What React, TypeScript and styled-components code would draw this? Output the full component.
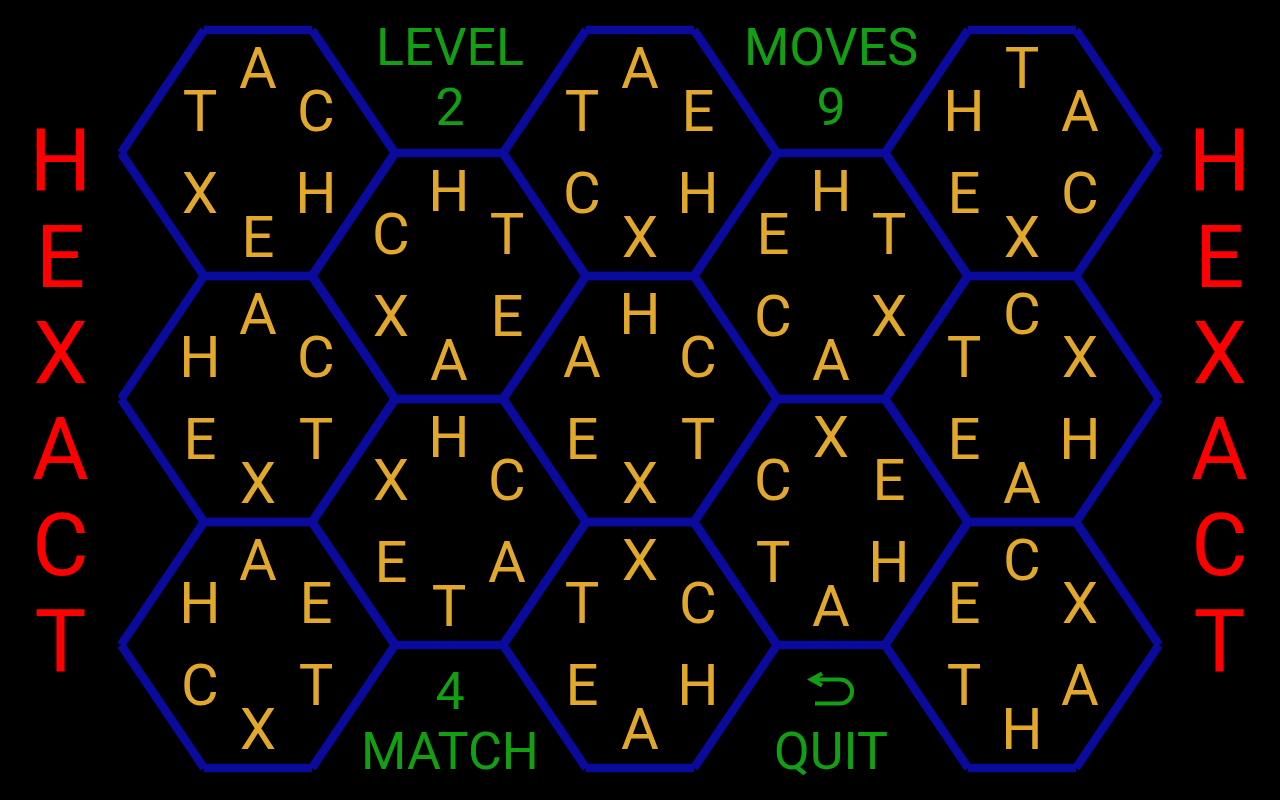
import React from 'react'
import styled, { createGlobalStyle } from 'styled-components'

const BOARD_LEFT = 121
const BOARD_WIDTH = 1038
const HALF_W = 137
const HALF_TOP = 54
const HALF_H = 123

const BLUE = '#0a0a9c'
const GOLD = '#e2a82c'
const GREEN = '#12a012'
const RED = '#ff0000'

const GlobalStyle = createGlobalStyle`
  html, body {
    margin: 0;
    padding: 0;
    background: #000;
  }
  body {
    font-family: Roboto, 'Liberation Sans', sans-serif;
  }
`

const Screen = styled.div`
  display: flex;
  flex-flow: row nowrap;
  width: 1280px;
  height: 800px;
  background: #000;
  overflow: hidden;
`

const SideTitle = styled.div`
  flex: 1;
  display: flex;
  flex-direction: column;
  align-items: center;
  justify-content: center;
  padding-top: 2px;
`

const TitleLetter = styled.span`
  color: ${RED};
  font-family: Roboto, 'Liberation Sans', sans-serif;
  font-size: 87px;
  line-height: 96px;
`

const Board = styled.div`
  position: relative;
  flex: 0 0 ${BOARD_WIDTH}px;
  height: 800px;
`

const Grid = styled.svg`
  position: absolute;
  inset: 0;
  overflow: visible;
`

const Letter = styled.span<{ $x: number; $y: number }>`
  position: absolute;
  left: ${({ $x }) => $x - BOARD_LEFT}px;
  top: ${({ $y }) => $y}px;
  transform: translate(-50%, -50%);
  color: ${GOLD};
  font-family: Roboto, 'Liberation Sans', sans-serif;
  font-size: 58px;
  line-height: 1;
`

const Stat = styled.div<{ $x: number; $y: number }>`
  position: absolute;
  left: ${({ $x }) => $x - BOARD_LEFT}px;
  top: ${({ $y }) => $y}px;
  transform: translateX(-50%);
  display: flex;
  flex-direction: column;
  align-items: center;
  color: ${GREEN};
  font-family: Roboto, 'Liberation Sans', sans-serif;
  font-size: 52px;
  line-height: 60px;
  white-space: nowrap;
`

const StatLine = styled.div`
  height: 60px;
  display: flex;
  align-items: center;
  justify-content: center;
`

// columns of the board, letters go top, upper-right, lower-right, bottom, lower-left, upper-left
const columns = [
  { x: 258, cells: [{ y: 153, l: 'ACHEXT' }, { y: 399, l: 'ACTXEH' }, { y: 645, l: 'AETXCH' }] },
  { x: 449, cells: [{ y: 276, l: 'HTEAXC' }, { y: 522, l: 'HCATEX' }] },
  { x: 640, cells: [{ y: 153, l: 'AEHXCT' }, { y: 399, l: 'HCTXEA' }, { y: 645, l: 'XCHAET' }] },
  { x: 831, cells: [{ y: 276, l: 'HTXACE' }, { y: 522, l: 'XEHATC' }] },
  { x: 1022, cells: [{ y: 153, l: 'TACXEH' }, { y: 399, l: 'CXHAET' }, { y: 645, l: 'CXAHTE' }] },
]

const spots = [
  [0, -85],
  [58, -42],
  [58, 40],
  [0, 84],
  [-58, 40],
  [-58, -42],
]

const cells = columns.flatMap((c) => c.cells.map((cell) => ({ x: c.x, y: cell.y, letters: cell.l })))

function hexEdges(cx: number, cy: number) {
  const pts = [
    [cx - HALF_W, cy],
    [cx - HALF_TOP, cy - HALF_H],
    [cx + HALF_TOP, cy - HALF_H],
    [cx + HALF_W, cy],
    [cx + HALF_TOP, cy + HALF_H],
    [cx - HALF_TOP, cy + HALF_H],
  ]
  return pts.map((p, i) => [p, pts[(i + 1) % 6]])
}

function QuitIcon() {
  return (
    <svg width='48' height='40' viewBox='808 670 48 40' fill='none'>
      <path
        d='M823 671.5 L812 677.5 L823 683.5 M812 677.5 H841 A12 12 0 0 1 841 701.5 H816'
        stroke={GREEN}
        strokeWidth='4'
      />
    </svg>
  )
}

function Title() {
  return (
    <SideTitle>
      {'HEXACT'.split('').map((ch, i) => (
        <TitleLetter key={i}>{ch}</TitleLetter>
      ))}
    </SideTitle>
  )
}

export default function App() {
  return (
    <Screen>
      <GlobalStyle />
      <Title />
      <Board>
        <Grid width={BOARD_WIDTH} height={800} viewBox={`${BOARD_LEFT} 0 ${BOARD_WIDTH} 800`}>
          {cells.map((c, i) =>
            hexEdges(c.x, c.y).map(([a, b], j) => (
              <line
                key={`${i}-${j}`}
                x1={a[0]}
                y1={a[1]}
                x2={b[0]}
                y2={b[1]}
                stroke={BLUE}
                strokeWidth={8.5}
              />
            ))
          )}
        </Grid>
        {cells.map((c, i) =>
          c.letters.split('').map((ch, j) => (
            <Letter key={`${i}-${j}`} $x={c.x + spots[j][0]} $y={c.y + spots[j][1]}>
              {ch}
            </Letter>
          ))
        )}
        <Stat $x={450} $y={18}>
          <StatLine>LEVEL</StatLine>
          <StatLine>2</StatLine>
        </Stat>
        <Stat $x={831} $y={18}>
          <StatLine>MOVES</StatLine>
          <StatLine>9</StatLine>
        </Stat>
        <Stat $x={450} $y={662}>
          <StatLine>4</StatLine>
          <StatLine>MATCH</StatLine>
        </Stat>
        <Stat $x={831} $y={662}>
          <StatLine>
            <QuitIcon />
          </StatLine>
          <StatLine>QUIT</StatLine>
        </Stat>
      </Board>
      <Title />
    </Screen>
  )
}
